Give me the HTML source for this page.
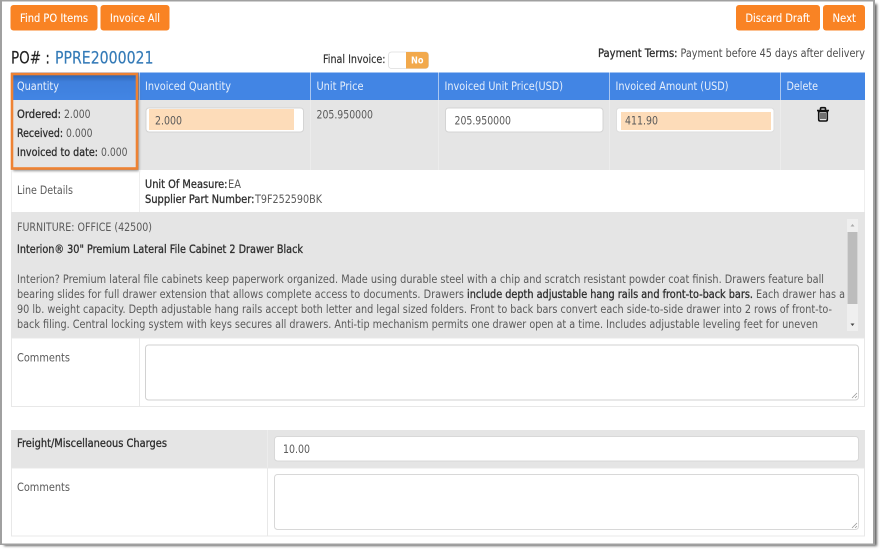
<!DOCTYPE html>
<html lang="en"><head><meta charset="utf-8"><title>Invoice</title>
<style>
html,body{margin:0;padding:0;background:#fff;width:882px;height:552px;overflow:hidden}
svg{display:block;filter:blur(.35px)}
text{font-family:"DejaVu Sans","Liberation Sans",sans-serif;font-size:11.2px;fill:#5a5a5a}
.b{fill:#2e2e2e;stroke:#2e2e2e;stroke-width:.3px}
.w{fill:#fff;font-size:11.2px;stroke:#fff;stroke-width:.1px}
.h{fill:#e6effc}
</style></head><body>
<svg width="882" height="552" viewBox="0 0 882 552" xmlns="http://www.w3.org/2000/svg">
<defs>
<filter id="s" x="-10%" y="-10%" width="120%" height="120%"><feGaussianBlur stdDeviation="1.2"/></filter>
<linearGradient id="q" x1="0" y1="0" x2="0" y2="1"><stop offset="0" stop-color="#2d62ad"/><stop offset=".3" stop-color="#3f7fdc"/><stop offset="1" stop-color="#4285e4"/></linearGradient>
</defs>
<!-- window frame -->
<rect x="4" y="4" width="873" height="542" fill="#666" filter="url(#s)"/>
<rect x="0" y="0" width="875" height="545" fill="#a0a0a0"/>
<rect x="2" y="1.500" width="871" height="542" fill="#fff"/>

<!-- buttons -->
<g fill="#f98324">
<rect x="10.500" y="5" width="87" height="25.500" rx="3"/>
<rect x="100.500" y="5" width="69" height="25.500" rx="3"/>
<rect x="736" y="5" width="84" height="25.500" rx="3"/>
<rect x="823" y="5" width="42" height="25.500" rx="3"/>
</g>
<text class="w" x="20" y="22" textLength="68" lengthAdjust="spacingAndGlyphs">Find PO Items</text>
<text class="w" x="110" y="22" textLength="50" lengthAdjust="spacingAndGlyphs">Invoice All</text>
<text class="w" x="745.500" y="22" textLength="64.500" lengthAdjust="spacingAndGlyphs">Discard Draft</text>
<text class="w" x="832.500" y="22" textLength="23.500" lengthAdjust="spacingAndGlyphs">Next</text>

<!-- title row -->
<text x="11" y="63.500" textLength="39" lengthAdjust="spacingAndGlyphs" style="font-size:17px;fill:#222;stroke:#222;stroke-width:.15px">PO# :</text>
<text x="55" y="63.500" textLength="98.500" lengthAdjust="spacingAndGlyphs" style="font-size:17px;fill:#337ab7;stroke:#337ab7;stroke-width:.15px">PPRE2000021</text>
<text x="323" y="63" textLength="62.500" lengthAdjust="spacingAndGlyphs" class="b" style="stroke-width:.15px">Final Invoice:</text>
<rect x="388.500" y="52" width="40" height="16.500" rx="3" fill="#fff" stroke="#ddd" stroke-width=".8"/>
<path d="M406 52h19.500a3 3 0 0 1 3 3v10.500a3 3 0 0 1-3 3H406z" fill="#f2a94c"/>
<text x="411" y="63.500" textLength="12.500" lengthAdjust="spacingAndGlyphs" style="fill:#fff;font-weight:bold;font-size:10px">No</text>
<text x="598" y="57" textLength="79.500" lengthAdjust="spacingAndGlyphs" class="b">Payment Terms:</text>
<text x="680.500" y="57" textLength="184.500" lengthAdjust="spacingAndGlyphs" style="fill:#4c4c4c">Payment before 45 days after delivery</text>

<!-- table header -->
<rect x="11" y="72.500" width="854" height="27.500" fill="#4285e4"/>
<rect x="139" y="72.500" width="1" height="27.500" fill="#a9c6f0"/>
<rect x="310" y="72.500" width="1" height="27.500" fill="#a9c6f0"/>
<rect x="438" y="72.500" width="1" height="27.500" fill="#a9c6f0"/>
<rect x="609" y="72.500" width="1" height="27.500" fill="#a9c6f0"/>
<rect x="780" y="72.500" width="1" height="27.500" fill="#a9c6f0"/>

<!-- main row -->
<rect x="11" y="100" width="854" height="70" fill="#e5e5e5"/>
<g fill="#ececec">
<rect x="139" y="100" width="1" height="70"/><rect x="310" y="100" width="1" height="70"/>
<rect x="438" y="100" width="1" height="70"/><rect x="609" y="100" width="1" height="70"/>
<rect x="780" y="100" width="1" height="70"/>
</g>

<!-- highlight -->
<rect x="13" y="76" width="126" height="95" fill="#666" filter="url(#s)" opacity=".7"/>
<rect x="12" y="74" width="125" height="94.500" fill="#e5e5e5"/>
<rect x="12" y="74" width="125" height="26" fill="url(#q)"/>
<rect x="12" y="74" width="125" height="94.500" fill="none" stroke="#ee8233" stroke-width="2.600"/>

<!-- header text -->
<text class="h" x="17" y="90" textLength="42" lengthAdjust="spacingAndGlyphs">Quantity</text>
<text class="h" x="145" y="90" textLength="86" lengthAdjust="spacingAndGlyphs">Invoiced Quantity</text>
<text class="h" x="316.500" y="90" textLength="47" lengthAdjust="spacingAndGlyphs">Unit Price</text>
<text class="h" x="444.500" y="90" textLength="118.500" lengthAdjust="spacingAndGlyphs">Invoiced Unit Price(USD)</text>
<text class="h" x="615.500" y="90" textLength="113" lengthAdjust="spacingAndGlyphs">Invoiced Amount (USD)</text>
<text class="h" x="786.500" y="90" textLength="31.500" lengthAdjust="spacingAndGlyphs">Delete</text>

<!-- quantity cell -->
<text class="b" x="17" y="118" textLength="44" lengthAdjust="spacingAndGlyphs">Ordered:</text>
<text x="64" y="118" textLength="26.500" lengthAdjust="spacingAndGlyphs">2.000</text>
<text class="b" x="17" y="137" textLength="46" lengthAdjust="spacingAndGlyphs">Received:</text>
<text x="66" y="137" textLength="26.500" lengthAdjust="spacingAndGlyphs">0.000</text>
<text class="b" x="17" y="156" textLength="81" lengthAdjust="spacingAndGlyphs">Invoiced to date:</text>
<text x="101" y="156" textLength="26.500" lengthAdjust="spacingAndGlyphs">0.000</text>

<!-- inputs -->
<rect x="146" y="108" width="157.500" height="24" rx="3" fill="#fff" stroke="#d4d4d4"/>
<rect x="149" y="109" width="145" height="21" fill="#fddcb9"/>
<text x="155" y="124.500" textLength="27" lengthAdjust="spacingAndGlyphs">2.000</text>
<text x="316.500" y="118.500" textLength="56.500" lengthAdjust="spacingAndGlyphs">205.950000</text>
<rect x="445.500" y="108" width="157.500" height="24" rx="3" fill="#fff" stroke="#d4d4d4"/>
<text x="454.500" y="124.500" textLength="56.500" lengthAdjust="spacingAndGlyphs">205.950000</text>
<rect x="616.500" y="108" width="157.500" height="24" rx="3" fill="#fff" stroke="#dedede"/>
<rect x="621" y="112" width="150" height="18" fill="#fddcb9"/>
<text x="625" y="124.500" textLength="33" lengthAdjust="spacingAndGlyphs">411.90</text>

<!-- trash -->
<path d="M817 110.600h12M820.500 110v-1.300q0-1 1-1h3q1 0 1 1v1.300" fill="none" stroke="#111" stroke-width="1.600"/>
<path d="M818.700 111.500h8.600v8q0 1.500-1.500 1.500h-5.600q-1.500 0-1.500-1.500z" fill="none" stroke="#111" stroke-width="1.600"/>
<path d="M821 113v6M823 113v6M825 113v6" stroke="#111" stroke-width="1.100"/>

<!-- line details -->
<rect x="11" y="170" width="1" height="42" fill="#eee"/>
<rect x="139" y="170" width="1" height="42" fill="#eee"/>
<rect x="864" y="170" width="1" height="42" fill="#eee"/>
<text x="17" y="194" textLength="56" lengthAdjust="spacingAndGlyphs">Line Details</text>
<text class="b" x="145" y="188" textLength="82.500" lengthAdjust="spacingAndGlyphs">Unit Of Measure:</text>
<text x="228" y="188" textLength="13" lengthAdjust="spacingAndGlyphs">EA</text>
<text class="b" x="145" y="203" textLength="109.500" lengthAdjust="spacingAndGlyphs">Supplier Part Number:</text>
<text x="255" y="203" textLength="67" lengthAdjust="spacingAndGlyphs">T9F252590BK</text>

<!-- description -->
<rect x="11" y="212" width="854" height="126" fill="#e5e5e5"/>
<text x="17" y="231" textLength="135" lengthAdjust="spacingAndGlyphs">FURNITURE: OFFICE (42500)</text>
<text class="b" x="17" y="253" textLength="286" lengthAdjust="spacingAndGlyphs">Interion® 30" Premium Lateral File Cabinet 2 Drawer Black</text>
<text x="17" y="283" textLength="807" lengthAdjust="spacingAndGlyphs">Interion? Premium lateral file cabinets keep paperwork organized. Made using durable steel with a chip and scratch resistant powder coat finish. Drawers feature ball</text>
<text x="17" y="298" textLength="447" lengthAdjust="spacingAndGlyphs">bearing slides for full drawer extension that allows complete access to documents. Drawers</text>
<text class="b" x="467" y="298" textLength="286" lengthAdjust="spacingAndGlyphs">include depth adjustable hang rails and front-to-back bars.</text>
<text x="756" y="298" textLength="89" lengthAdjust="spacingAndGlyphs">Each drawer has a</text>
<text x="17" y="313" textLength="815" lengthAdjust="spacingAndGlyphs">90 lb. weight capacity. Depth adjustable hang rails accept both letter and legal sized folders. Front to back bars convert each side-to-side drawer into 2 rows of front-to-</text>
<text x="17" y="328" textLength="801" lengthAdjust="spacingAndGlyphs">back filing. Central locking system with keys secures all drawers. Anti-tip mechanism permits one drawer open at a time. Includes adjustable leveling feet for uneven</text>
<rect x="847" y="219" width="11" height="112" fill="#efefef"/>
<rect x="847.500" y="232" width="10" height="72" fill="#bcbcbc"/>
<path d="M850.500 226.500l2-2.500 2 2.500z" fill="#aaa"/>
<path d="M850.500 323.500l2 2.500 2-2.500z" fill="#444"/>

<!-- comments -->
<rect x="11.500" y="338" width="853" height="68.500" fill="none" stroke="#e8e8e8"/>
<rect x="139" y="338" width="1" height="68" fill="#e8e8e8"/>
<text x="17" y="361.500" textLength="53" lengthAdjust="spacingAndGlyphs">Comments</text>
<rect x="145.500" y="345" width="713" height="55" rx="3" fill="#fff" stroke="#d2d2d2"/>
<path d="M852 398l5-5M855 398l2-2" stroke="#999" stroke-width=".8"/>

<!-- freight -->
<rect x="11" y="430" width="854" height="38" fill="#e5e5e5"/>
<rect x="267" y="430" width="1" height="38" fill="#ececec"/>
<text class="b" x="17" y="447" textLength="150" lengthAdjust="spacingAndGlyphs">Freight/Miscellaneous Charges</text>
<rect x="274.500" y="436.500" width="584" height="24.500" rx="3" fill="#fff" stroke="#d8d8d8"/>
<text x="283" y="453" textLength="27" lengthAdjust="spacingAndGlyphs">10.00</text>
<rect x="11.500" y="468" width="853" height="68" fill="none" stroke="#e8e8e8"/>
<rect x="267" y="468" width="1" height="68" fill="#e8e8e8"/>
<text x="17" y="491" textLength="53" lengthAdjust="spacingAndGlyphs">Comments</text>
<rect x="274.500" y="474.500" width="584" height="55" rx="3" fill="#fff" stroke="#d8d8d8"/>
<path d="M852 528l5-5M855 528l2-2" stroke="#999" stroke-width=".8"/>
</svg>
</body></html>
